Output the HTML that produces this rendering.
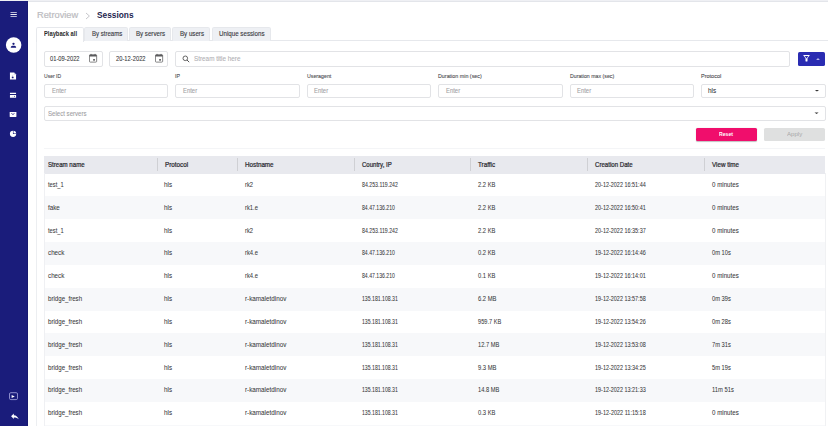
<!DOCTYPE html>
<html><head><meta charset="utf-8"><style>
html,body{margin:0;padding:0;width:828px;height:426px;overflow:hidden;background:#fff;position:relative;}
.t{position:absolute;white-space:nowrap;line-height:1;font-family:"Liberation Sans",sans-serif;}
.b{position:absolute;}
</style></head><body>
<div class="b" style="left:0.00px;top:0.00px;width:828.00px;height:2.10px;background:#eff0f4;border-bottom:0.4px solid #e3e5ea;box-sizing:border-box"></div>
<div class="b" style="left:0.00px;top:1.40px;width:28.00px;height:424.60px;background:#1a1c7b"></div>
<svg class="b" style="left:0;top:0" width="28" height="426" viewBox="0 0 28 426">
 <rect x="27.2" y="1.4" width="0.8" height="425" fill="#16186e"/>
 <g fill="#ececf4">
  <rect x="10.45" y="11.9" width="6.4" height="0.95" rx="0.3"/>
  <rect x="10.45" y="14.0" width="6.4" height="0.95" rx="0.3"/>
  <rect x="10.45" y="16.15" width="6.4" height="0.95" rx="0.3"/>
 </g>
 <circle cx="13.65" cy="45.1" r="7.75" fill="#fff"/>
 <g fill="#1a1c7b">
  <circle cx="13.5" cy="43.8" r="1.15"/>
  <path d="M10.8 47.8 v-0.7 c0-1 1.6-1.4 2.7-1.4 s2.6 0.4 2.6 1.4 v0.7z"/>
 </g>
 <path d="M9.95 72.5 h4.1 l2 2 v5.1 h-6.1z" fill="#fff"/>
 <path d="M14.05 72.5 v2 h2z" fill="#c8c8dc"/>
 <circle cx="12.7" cy="77.4" r="0.95" fill="#1a1c7b"/>
 <path d="M12.1 76.3 q0.2 -1.5 1.5 -1.6" stroke="#b0b0c8" stroke-width="0.4" fill="none"/>
 <rect x="9.95" y="92.8" width="6.1" height="1.3" rx="0.2" fill="#fff"/>
 <rect x="9.95" y="95.05" width="6.15" height="2.65" rx="0.3" fill="#fff"/>
 <circle cx="14.4" cy="96.4" r="0.55" fill="#6a6a90"/>
 <circle cx="12.5" cy="96.4" r="0.4" fill="#d0d0dc"/>
 <rect x="9.7" y="112.1" width="6.7" height="4.8" rx="0.3" fill="#fff"/>
 <path d="M11.4 113.4 q1.55 2.2 3.1 0" stroke="#1a1c7b" stroke-width="0.8" fill="none"/>
 <circle cx="13.05" cy="133.85" r="3.15" fill="#fff"/>
 <path d="M13.4 133.5 h3.2 M13.4 133.5 v-3.2" stroke="#1a1c7b" stroke-width="0.55"/>
 <circle cx="13.45" cy="133.45" r="0.5" fill="#1a1c7b"/>
 <rect x="9.5" y="392.7" width="8" height="6.9" rx="1.3" fill="none" stroke="#9a9ad6" stroke-width="0.9"/>
 <path d="M11.6 395 l3.2 1.5 l-3.2 1.5z" fill="#fff"/>
 <path d="M11.1 416.3 L13.8 413.6 V415.2 C16.3 415.4 17.8 416.8 18.8 419.3 C17.6 418 16 417.4 13.8 417.4 V418.9 Z" fill="#fff"/>
</svg>
<div class="t" style="left:36.90px;top:11.00px;font-size:9.2px;color:#bcbcc1;font-weight:400;transform:scaleX(1.0073);transform-origin:0 0;-webkit-text-stroke:0.22px #bcbcc1;">Retroview</div>
<svg class="b" style="left:85px;top:12px" width="6" height="8" viewBox="0 0 6 8"><path d="M1 1 L4.4 4 L1 7" stroke="#c0c0c4" stroke-width="0.9" fill="none"/></svg>
<div class="t" style="left:97.40px;top:11.00px;font-size:8.8px;color:#1e1f4f;font-weight:700;transform:scaleX(0.9472);transform-origin:0 0;">Sessions</div>
<div class="b" style="left:36.00px;top:41.00px;width:0.80px;height:385.00px;background:#eceef1"></div>
<div class="b" style="left:36.30px;top:40.40px;width:791.70px;height:0.70px;background:#e6e8ec"></div>
<div class="b" style="left:36.30px;top:27.30px;width:47.70px;height:14.70px;background:#fff;border:0.7px solid #e6e8ec;border-bottom:none;border-radius:2.2px 2.2px 0 0;box-sizing:border-box"></div>
<div class="b" style="left:84.30px;top:27.30px;width:43.70px;height:13.40px;background:#eef0f4;border:0.6px solid #e6e8ec;border-bottom:none;border-radius:2.2px 2.2px 0 0;box-sizing:border-box"></div>
<div class="b" style="left:129.30px;top:27.30px;width:42.00px;height:13.40px;background:#eef0f4;border:0.6px solid #e6e8ec;border-bottom:none;border-radius:2.2px 2.2px 0 0;box-sizing:border-box"></div>
<div class="b" style="left:172.40px;top:27.30px;width:38.00px;height:13.40px;background:#eef0f4;border:0.6px solid #e6e8ec;border-bottom:none;border-radius:2.2px 2.2px 0 0;box-sizing:border-box"></div>
<div class="b" style="left:211.50px;top:27.30px;width:59.50px;height:13.40px;background:#eef0f4;border:0.6px solid #e6e8ec;border-bottom:none;border-radius:2.2px 2.2px 0 0;box-sizing:border-box"></div>
<div class="t" style="left:44.10px;top:31.00px;font-size:6.5px;color:#2b2b2b;font-weight:700;transform:scaleX(0.8866);transform-origin:0 0;">Playback all</div>
<div class="t" style="left:91.60px;top:31.00px;font-size:6.5px;color:#38383e;font-weight:400;transform:scaleX(0.9290);transform-origin:0 0;-webkit-text-stroke:0.12px #38383e;">By streams</div>
<div class="t" style="left:136.00px;top:31.00px;font-size:6.5px;color:#38383e;font-weight:400;transform:scaleX(0.9446);transform-origin:0 0;-webkit-text-stroke:0.12px #38383e;">By servers</div>
<div class="t" style="left:179.50px;top:31.00px;font-size:6.5px;color:#38383e;font-weight:400;transform:scaleX(0.9491);transform-origin:0 0;-webkit-text-stroke:0.12px #38383e;">By users</div>
<div class="t" style="left:218.50px;top:31.00px;font-size:6.5px;color:#38383e;font-weight:400;transform:scaleX(0.9540);transform-origin:0 0;-webkit-text-stroke:0.12px #38383e;">Unique sessions</div>
<div class="b" style="left:43.50px;top:51.40px;width:59.30px;height:15.60px;background:#fff;border:0.7px solid #e2e3e6;border-radius:2px;box-sizing:border-box"></div>
<div class="t" style="left:49.90px;top:56.00px;font-size:6.8px;color:#333336;font-weight:400;transform:scaleX(0.8510);transform-origin:0 0;-webkit-text-stroke:0.06px #333336;">01-09-2022</div>
<svg class="b" style="left:88.90px;top:53px" width="10" height="11" viewBox="0 0 10 11"><rect x="0.45" y="1.8" width="7.2" height="7.3" rx="0.8" fill="none" stroke="#5c5c5e" stroke-width="0.75"/><rect x="0.45" y="1.8" width="7.2" height="1.7" fill="#5c5c5e"/><rect x="1.6" y="0.9" width="0.9" height="1.5" fill="#5a5a5c"/><rect x="5.6" y="0.9" width="0.9" height="1.5" fill="#5a5a5c"/><rect x="4.2" y="6" width="1.7" height="1.7" fill="#5a5a5c"/></svg>
<div class="b" style="left:109.10px;top:51.40px;width:59.40px;height:15.60px;background:#fff;border:0.7px solid #e2e3e6;border-radius:2px;box-sizing:border-box"></div>
<div class="t" style="left:115.50px;top:56.00px;font-size:6.8px;color:#333336;font-weight:400;transform:scaleX(0.8510);transform-origin:0 0;-webkit-text-stroke:0.06px #333336;">20-12-2022</div>
<svg class="b" style="left:154.50px;top:53px" width="10" height="11" viewBox="0 0 10 11"><rect x="0.45" y="1.8" width="7.2" height="7.3" rx="0.8" fill="none" stroke="#5c5c5e" stroke-width="0.75"/><rect x="0.45" y="1.8" width="7.2" height="1.7" fill="#5c5c5e"/><rect x="1.6" y="0.9" width="0.9" height="1.5" fill="#5a5a5c"/><rect x="5.6" y="0.9" width="0.9" height="1.5" fill="#5a5a5c"/><rect x="4.2" y="6" width="1.7" height="1.7" fill="#5a5a5c"/></svg>
<div class="b" style="left:175.00px;top:51.40px;width:615.00px;height:15.60px;background:#fff;border:0.7px solid #e2e3e6;border-radius:2px;box-sizing:border-box"></div>
<svg class="b" style="left:182px;top:55px" width="8" height="8" viewBox="0 0 8 8"><circle cx="3.3" cy="3.3" r="2.3" fill="none" stroke="#555" stroke-width="0.9"/><path d="M5 5 L7.2 7.2" stroke="#555" stroke-width="1"/></svg>
<div class="t" style="left:193.60px;top:56.00px;font-size:6.8px;color:#b0b0b4;font-weight:400;transform:scaleX(0.9321);transform-origin:0 0;-webkit-text-stroke:0.08px #b0b0b4;">Stream title here</div>
<div class="b" style="left:797.60px;top:51.90px;width:27.30px;height:13.80px;background:#2a2cb2;border-radius:1.6px"></div>
<svg class="b" style="left:796px;top:50px" width="30" height="18" viewBox="796 50 30 18"><path d="M803.1 55.1 H809.9 L807.5 58.2 V61.2 Q806.5 62 805.5 61.2 V58.2 Z" fill="#fff"/><path d="M804.6 55.95 H808.4 L806.5 58.4 Z" fill="#2a2cb2"/><path d="M816.1 59.9 L818 58 L819.9 59.9 Z" fill="#b8b8e8"/></svg>
<div class="t" style="left:43.90px;top:74.00px;font-size:5.8px;color:#4c4c50;font-weight:400;transform:scaleX(0.8699);transform-origin:0 0;-webkit-text-stroke:0.1px #4c4c50;">User ID</div>
<div class="b" style="left:43.70px;top:83.80px;width:124.60px;height:13.80px;background:#fff;border:0.7px solid #e2e3e6;border-radius:2px;box-sizing:border-box"></div>
<div class="t" style="left:51.50px;top:88.00px;font-size:6.8px;color:#9e9ea2;font-weight:400;transform:scaleX(0.8675);transform-origin:0 0;-webkit-text-stroke:0.08px #9e9ea2;">Enter</div>
<div class="t" style="left:175.35px;top:74.00px;font-size:5.8px;color:#4c4c50;font-weight:400;transform:scaleX(0.9124);transform-origin:0 0;-webkit-text-stroke:0.1px #4c4c50;">IP</div>
<div class="b" style="left:175.15px;top:83.80px;width:124.60px;height:13.80px;background:#fff;border:0.7px solid #e2e3e6;border-radius:2px;box-sizing:border-box"></div>
<div class="t" style="left:182.95px;top:88.00px;font-size:6.8px;color:#9e9ea2;font-weight:400;transform:scaleX(0.8675);transform-origin:0 0;-webkit-text-stroke:0.08px #9e9ea2;">Enter</div>
<div class="t" style="left:306.80px;top:74.00px;font-size:5.8px;color:#4c4c50;font-weight:400;transform:scaleX(0.9081);transform-origin:0 0;-webkit-text-stroke:0.1px #4c4c50;">Useragent</div>
<div class="b" style="left:306.60px;top:83.80px;width:124.60px;height:13.80px;background:#fff;border:0.7px solid #e2e3e6;border-radius:2px;box-sizing:border-box"></div>
<div class="t" style="left:314.40px;top:88.00px;font-size:6.8px;color:#9e9ea2;font-weight:400;transform:scaleX(0.8675);transform-origin:0 0;-webkit-text-stroke:0.08px #9e9ea2;">Enter</div>
<div class="t" style="left:438.25px;top:74.00px;font-size:5.8px;color:#4c4c50;font-weight:400;transform:scaleX(0.9244);transform-origin:0 0;-webkit-text-stroke:0.1px #4c4c50;">Duration min (sec)</div>
<div class="b" style="left:438.05px;top:83.80px;width:124.60px;height:13.80px;background:#fff;border:0.7px solid #e2e3e6;border-radius:2px;box-sizing:border-box"></div>
<div class="t" style="left:445.85px;top:88.00px;font-size:6.8px;color:#9e9ea2;font-weight:400;transform:scaleX(0.8675);transform-origin:0 0;-webkit-text-stroke:0.08px #9e9ea2;">Enter</div>
<div class="t" style="left:569.70px;top:74.00px;font-size:5.8px;color:#4c4c50;font-weight:400;transform:scaleX(0.9022);transform-origin:0 0;-webkit-text-stroke:0.1px #4c4c50;">Duration max (sec)</div>
<div class="b" style="left:569.50px;top:83.80px;width:124.60px;height:13.80px;background:#fff;border:0.7px solid #e2e3e6;border-radius:2px;box-sizing:border-box"></div>
<div class="t" style="left:577.30px;top:88.00px;font-size:6.8px;color:#9e9ea2;font-weight:400;transform:scaleX(0.8675);transform-origin:0 0;-webkit-text-stroke:0.08px #9e9ea2;">Enter</div>
<div class="t" style="left:701.15px;top:74.00px;font-size:5.8px;color:#4c4c50;font-weight:400;transform:scaleX(0.9494);transform-origin:0 0;-webkit-text-stroke:0.1px #4c4c50;">Protocol</div>
<div class="b" style="left:700.95px;top:83.80px;width:124.65px;height:13.80px;background:#fff;border:0.7px solid #e2e3e6;border-radius:2px;box-sizing:border-box"></div>
<div class="t" style="left:708.05px;top:88.00px;font-size:6.8px;color:#333336;font-weight:400;transform:scaleX(0.9433);transform-origin:0 0;-webkit-text-stroke:0.05px #333336;">hls</div>
<svg class="b" style="left:814px;top:89px" width="6" height="3" viewBox="0 0 6 3"><path d="M0.9 0.9 h4.1 l-2.05 1.7z" fill="#333"/></svg>
<div class="b" style="left:43.70px;top:106.30px;width:781.90px;height:14.30px;background:#fff;border:0.7px solid #e2e3e6;border-radius:2px;box-sizing:border-box"></div>
<div class="t" style="left:48.00px;top:111.00px;font-size:6.8px;color:#9e9ea2;font-weight:400;transform:scaleX(0.8960);transform-origin:0 0;-webkit-text-stroke:0.08px #9e9ea2;">Select servers</div>
<svg class="b" style="left:813.5px;top:111.6px" width="6" height="3" viewBox="0 0 6 3"><path d="M0.5 0.4 h4.1 l-2.05 1.7z" fill="#333"/></svg>
<div class="b" style="left:695.60px;top:127.55px;width:61.50px;height:13.35px;background:#f00e6c;border-radius:1.6px;box-shadow:0 0.5px 1px rgba(0,0,0,0.25)"></div>
<div class="t" style="left:718.90px;top:132.00px;font-size:5.4px;color:#ffffff;font-weight:700;transform:scaleX(0.9519);transform-origin:0 0;">Reset</div>
<div class="b" style="left:764.20px;top:127.60px;width:61.00px;height:13.15px;background:#dfe0e0;border-radius:1.6px"></div>
<div class="t" style="left:786.90px;top:132.00px;font-size:5.8px;color:#a8a8a8;font-weight:400;transform:scaleX(1.0477);transform-origin:0 0;">Apply</div>
<div class="b" style="left:43.50px;top:147.60px;width:781.50px;height:1.00px;background:#f4f5f7"></div>
<div class="b" style="left:43.90px;top:155.50px;width:781.30px;height:18.10px;background:#e8e9ee"></div>
<div class="b" style="left:156.75px;top:158.40px;width:0.70px;height:12.60px;background:#cfd0d4"></div>
<div class="b" style="left:237.05px;top:158.40px;width:0.70px;height:12.60px;background:#cfd0d4"></div>
<div class="b" style="left:353.85px;top:158.40px;width:0.70px;height:12.60px;background:#cfd0d4"></div>
<div class="b" style="left:470.05px;top:158.40px;width:0.70px;height:12.60px;background:#cfd0d4"></div>
<div class="b" style="left:587.15px;top:158.40px;width:0.70px;height:12.60px;background:#cfd0d4"></div>
<div class="b" style="left:703.95px;top:158.40px;width:0.70px;height:12.60px;background:#cfd0d4"></div>
<div class="t" style="left:47.70px;top:162.00px;font-size:6.5px;color:#2a2a30;font-weight:400;transform:scaleX(0.9381);transform-origin:0 0;-webkit-text-stroke:0.22px #2a2a30;">Stream name</div>
<div class="t" style="left:164.60px;top:162.00px;font-size:6.5px;color:#2a2a30;font-weight:400;transform:scaleX(0.9729);transform-origin:0 0;-webkit-text-stroke:0.22px #2a2a30;">Protocol</div>
<div class="t" style="left:244.60px;top:162.00px;font-size:6.5px;color:#2a2a30;font-weight:400;transform:scaleX(0.9650);transform-origin:0 0;-webkit-text-stroke:0.22px #2a2a30;">Hostname</div>
<div class="t" style="left:361.70px;top:162.00px;font-size:6.5px;color:#2a2a30;font-weight:400;transform:scaleX(0.9272);transform-origin:0 0;-webkit-text-stroke:0.22px #2a2a30;">Country, IP</div>
<div class="t" style="left:478.10px;top:162.00px;font-size:6.5px;color:#2a2a30;font-weight:400;transform:scaleX(0.9662);transform-origin:0 0;-webkit-text-stroke:0.22px #2a2a30;">Traffic</div>
<div class="t" style="left:594.90px;top:162.00px;font-size:6.5px;color:#2a2a30;font-weight:400;transform:scaleX(0.9375);transform-origin:0 0;-webkit-text-stroke:0.22px #2a2a30;">Creation Date</div>
<div class="t" style="left:711.60px;top:162.00px;font-size:6.5px;color:#2a2a30;font-weight:400;transform:scaleX(0.9623);transform-origin:0 0;-webkit-text-stroke:0.22px #2a2a30;">View time</div>
<div class="t" style="left:47.70px;top:182.00px;font-size:6.8px;color:#38383b;font-weight:400;transform:scaleX(0.8483);transform-origin:0 0;-webkit-text-stroke:0.05px #38383b;">test_1</div>
<div class="t" style="left:164.40px;top:182.00px;font-size:6.8px;color:#38383b;font-weight:400;transform:scaleX(0.9224);transform-origin:0 0;-webkit-text-stroke:0.05px #38383b;">hls</div>
<div class="t" style="left:244.60px;top:182.00px;font-size:6.8px;color:#38383b;font-weight:400;transform:scaleX(0.8593);transform-origin:0 0;-webkit-text-stroke:0.05px #38383b;">rk2</div>
<div class="t" style="left:361.80px;top:182.00px;font-size:6.8px;color:#38383b;font-weight:400;transform:scaleX(0.7672);transform-origin:0 0;-webkit-text-stroke:0.05px #38383b;">84.253.119.242</div>
<div class="t" style="left:478.10px;top:182.00px;font-size:6.8px;color:#38383b;font-weight:400;transform:scaleX(0.8525);transform-origin:0 0;-webkit-text-stroke:0.05px #38383b;">2.2 KB</div>
<div class="t" style="left:595.00px;top:182.00px;font-size:6.8px;color:#38383b;font-weight:400;transform:scaleX(0.8033);transform-origin:0 0;-webkit-text-stroke:0.05px #38383b;">20-12-2022 16:51:44</div>
<div class="t" style="left:711.80px;top:182.00px;font-size:6.8px;color:#38383b;font-weight:400;transform:scaleX(0.9074);transform-origin:0 0;-webkit-text-stroke:0.05px #38383b;">0 minutes</div>
<div class="b" style="left:43.90px;top:196.42px;width:781.30px;height:22.82px;background:#f7f8fa"></div>
<div class="t" style="left:47.70px;top:205.00px;font-size:6.8px;color:#38383b;font-weight:400;transform:scaleX(0.9224);transform-origin:0 0;-webkit-text-stroke:0.05px #38383b;">fake</div>
<div class="t" style="left:164.40px;top:205.00px;font-size:6.8px;color:#38383b;font-weight:400;transform:scaleX(0.9224);transform-origin:0 0;-webkit-text-stroke:0.05px #38383b;">hls</div>
<div class="t" style="left:244.60px;top:205.00px;font-size:6.8px;color:#38383b;font-weight:400;transform:scaleX(0.8573);transform-origin:0 0;-webkit-text-stroke:0.05px #38383b;">rk1.e</div>
<div class="t" style="left:361.80px;top:205.00px;font-size:6.8px;color:#38383b;font-weight:400;transform:scaleX(0.7585);transform-origin:0 0;-webkit-text-stroke:0.05px #38383b;">84.47.136.210</div>
<div class="t" style="left:478.10px;top:205.00px;font-size:6.8px;color:#38383b;font-weight:400;transform:scaleX(0.8525);transform-origin:0 0;-webkit-text-stroke:0.05px #38383b;">2.2 KB</div>
<div class="t" style="left:595.00px;top:205.00px;font-size:6.8px;color:#38383b;font-weight:400;transform:scaleX(0.8033);transform-origin:0 0;-webkit-text-stroke:0.05px #38383b;">20-12-2022 16:50:41</div>
<div class="t" style="left:711.80px;top:205.00px;font-size:6.8px;color:#38383b;font-weight:400;transform:scaleX(0.9074);transform-origin:0 0;-webkit-text-stroke:0.05px #38383b;">0 minutes</div>
<div class="t" style="left:47.70px;top:228.00px;font-size:6.8px;color:#38383b;font-weight:400;transform:scaleX(0.8483);transform-origin:0 0;-webkit-text-stroke:0.05px #38383b;">test_1</div>
<div class="t" style="left:164.40px;top:228.00px;font-size:6.8px;color:#38383b;font-weight:400;transform:scaleX(0.9224);transform-origin:0 0;-webkit-text-stroke:0.05px #38383b;">hls</div>
<div class="t" style="left:244.60px;top:228.00px;font-size:6.8px;color:#38383b;font-weight:400;transform:scaleX(0.8593);transform-origin:0 0;-webkit-text-stroke:0.05px #38383b;">rk2</div>
<div class="t" style="left:361.80px;top:228.00px;font-size:6.8px;color:#38383b;font-weight:400;transform:scaleX(0.7672);transform-origin:0 0;-webkit-text-stroke:0.05px #38383b;">84.253.119.242</div>
<div class="t" style="left:478.10px;top:228.00px;font-size:6.8px;color:#38383b;font-weight:400;transform:scaleX(0.8525);transform-origin:0 0;-webkit-text-stroke:0.05px #38383b;">2.2 KB</div>
<div class="t" style="left:595.00px;top:228.00px;font-size:6.8px;color:#38383b;font-weight:400;transform:scaleX(0.8033);transform-origin:0 0;-webkit-text-stroke:0.05px #38383b;">20-12-2022 16:35:37</div>
<div class="t" style="left:711.80px;top:228.00px;font-size:6.8px;color:#38383b;font-weight:400;transform:scaleX(0.9074);transform-origin:0 0;-webkit-text-stroke:0.05px #38383b;">0 minutes</div>
<div class="b" style="left:43.90px;top:242.06px;width:781.30px;height:22.82px;background:#f7f8fa"></div>
<div class="t" style="left:47.70px;top:250.00px;font-size:6.8px;color:#38383b;font-weight:400;transform:scaleX(0.9224);transform-origin:0 0;-webkit-text-stroke:0.05px #38383b;">check</div>
<div class="t" style="left:164.40px;top:250.00px;font-size:6.8px;color:#38383b;font-weight:400;transform:scaleX(0.9224);transform-origin:0 0;-webkit-text-stroke:0.05px #38383b;">hls</div>
<div class="t" style="left:244.60px;top:250.00px;font-size:6.8px;color:#38383b;font-weight:400;transform:scaleX(0.8573);transform-origin:0 0;-webkit-text-stroke:0.05px #38383b;">rk4.e</div>
<div class="t" style="left:361.80px;top:250.00px;font-size:6.8px;color:#38383b;font-weight:400;transform:scaleX(0.7585);transform-origin:0 0;-webkit-text-stroke:0.05px #38383b;">84.47.136.210</div>
<div class="t" style="left:478.10px;top:250.00px;font-size:6.8px;color:#38383b;font-weight:400;transform:scaleX(0.8525);transform-origin:0 0;-webkit-text-stroke:0.05px #38383b;">0.2 KB</div>
<div class="t" style="left:595.00px;top:250.00px;font-size:6.8px;color:#38383b;font-weight:400;transform:scaleX(0.8033);transform-origin:0 0;-webkit-text-stroke:0.05px #38383b;">19-12-2022 16:14:46</div>
<div class="t" style="left:711.80px;top:250.00px;font-size:6.8px;color:#38383b;font-weight:400;transform:scaleX(0.8491);transform-origin:0 0;-webkit-text-stroke:0.05px #38383b;">0m 10s</div>
<div class="t" style="left:47.70px;top:273.00px;font-size:6.8px;color:#38383b;font-weight:400;transform:scaleX(0.9224);transform-origin:0 0;-webkit-text-stroke:0.05px #38383b;">check</div>
<div class="t" style="left:164.40px;top:273.00px;font-size:6.8px;color:#38383b;font-weight:400;transform:scaleX(0.9224);transform-origin:0 0;-webkit-text-stroke:0.05px #38383b;">hls</div>
<div class="t" style="left:244.60px;top:273.00px;font-size:6.8px;color:#38383b;font-weight:400;transform:scaleX(0.8573);transform-origin:0 0;-webkit-text-stroke:0.05px #38383b;">rk4.e</div>
<div class="t" style="left:361.80px;top:273.00px;font-size:6.8px;color:#38383b;font-weight:400;transform:scaleX(0.7585);transform-origin:0 0;-webkit-text-stroke:0.05px #38383b;">84.47.136.210</div>
<div class="t" style="left:478.10px;top:273.00px;font-size:6.8px;color:#38383b;font-weight:400;transform:scaleX(0.8525);transform-origin:0 0;-webkit-text-stroke:0.05px #38383b;">0.1 KB</div>
<div class="t" style="left:595.00px;top:273.00px;font-size:6.8px;color:#38383b;font-weight:400;transform:scaleX(0.8033);transform-origin:0 0;-webkit-text-stroke:0.05px #38383b;">19-12-2022 16:14:01</div>
<div class="t" style="left:711.80px;top:273.00px;font-size:6.8px;color:#38383b;font-weight:400;transform:scaleX(0.9074);transform-origin:0 0;-webkit-text-stroke:0.05px #38383b;">0 minutes</div>
<div class="b" style="left:43.90px;top:287.70px;width:781.30px;height:22.82px;background:#f7f8fa"></div>
<div class="t" style="left:47.70px;top:296.00px;font-size:6.8px;color:#38383b;font-weight:400;transform:scaleX(0.9019);transform-origin:0 0;-webkit-text-stroke:0.05px #38383b;">bridge_fresh</div>
<div class="t" style="left:164.40px;top:296.00px;font-size:6.8px;color:#38383b;font-weight:400;transform:scaleX(0.9224);transform-origin:0 0;-webkit-text-stroke:0.05px #38383b;">hls</div>
<div class="t" style="left:244.60px;top:296.00px;font-size:6.8px;color:#38383b;font-weight:400;transform:scaleX(0.9266);transform-origin:0 0;-webkit-text-stroke:0.05px #38383b;">r-kamaletdinov</div>
<div class="t" style="left:361.80px;top:296.00px;font-size:6.8px;color:#38383b;font-weight:400;transform:scaleX(0.7590);transform-origin:0 0;-webkit-text-stroke:0.05px #38383b;">135.181.108.31</div>
<div class="t" style="left:478.10px;top:296.00px;font-size:6.8px;color:#38383b;font-weight:400;transform:scaleX(0.8562);transform-origin:0 0;-webkit-text-stroke:0.05px #38383b;">6.2 MB</div>
<div class="t" style="left:595.00px;top:296.00px;font-size:6.8px;color:#38383b;font-weight:400;transform:scaleX(0.8033);transform-origin:0 0;-webkit-text-stroke:0.05px #38383b;">19-12-2022 13:57:58</div>
<div class="t" style="left:711.80px;top:296.00px;font-size:6.8px;color:#38383b;font-weight:400;transform:scaleX(0.8491);transform-origin:0 0;-webkit-text-stroke:0.05px #38383b;">0m 39s</div>
<div class="t" style="left:47.70px;top:319.00px;font-size:6.8px;color:#38383b;font-weight:400;transform:scaleX(0.9019);transform-origin:0 0;-webkit-text-stroke:0.05px #38383b;">bridge_fresh</div>
<div class="t" style="left:164.40px;top:319.00px;font-size:6.8px;color:#38383b;font-weight:400;transform:scaleX(0.9224);transform-origin:0 0;-webkit-text-stroke:0.05px #38383b;">hls</div>
<div class="t" style="left:244.60px;top:319.00px;font-size:6.8px;color:#38383b;font-weight:400;transform:scaleX(0.9266);transform-origin:0 0;-webkit-text-stroke:0.05px #38383b;">r-kamaletdinov</div>
<div class="t" style="left:361.80px;top:319.00px;font-size:6.8px;color:#38383b;font-weight:400;transform:scaleX(0.7590);transform-origin:0 0;-webkit-text-stroke:0.05px #38383b;">135.181.108.31</div>
<div class="t" style="left:478.10px;top:319.00px;font-size:6.8px;color:#38383b;font-weight:400;transform:scaleX(0.8288);transform-origin:0 0;-webkit-text-stroke:0.05px #38383b;">959.7 KB</div>
<div class="t" style="left:595.00px;top:319.00px;font-size:6.8px;color:#38383b;font-weight:400;transform:scaleX(0.8033);transform-origin:0 0;-webkit-text-stroke:0.05px #38383b;">19-12-2022 13:54:26</div>
<div class="t" style="left:711.80px;top:319.00px;font-size:6.8px;color:#38383b;font-weight:400;transform:scaleX(0.8491);transform-origin:0 0;-webkit-text-stroke:0.05px #38383b;">0m 28s</div>
<div class="b" style="left:43.90px;top:333.34px;width:781.30px;height:22.82px;background:#f7f8fa"></div>
<div class="t" style="left:47.70px;top:342.00px;font-size:6.8px;color:#38383b;font-weight:400;transform:scaleX(0.9019);transform-origin:0 0;-webkit-text-stroke:0.05px #38383b;">bridge_fresh</div>
<div class="t" style="left:164.40px;top:342.00px;font-size:6.8px;color:#38383b;font-weight:400;transform:scaleX(0.9224);transform-origin:0 0;-webkit-text-stroke:0.05px #38383b;">hls</div>
<div class="t" style="left:244.60px;top:342.00px;font-size:6.8px;color:#38383b;font-weight:400;transform:scaleX(0.9266);transform-origin:0 0;-webkit-text-stroke:0.05px #38383b;">r-kamaletdinov</div>
<div class="t" style="left:361.80px;top:342.00px;font-size:6.8px;color:#38383b;font-weight:400;transform:scaleX(0.7590);transform-origin:0 0;-webkit-text-stroke:0.05px #38383b;">135.181.108.31</div>
<div class="t" style="left:478.10px;top:342.00px;font-size:6.8px;color:#38383b;font-weight:400;transform:scaleX(0.8425);transform-origin:0 0;-webkit-text-stroke:0.05px #38383b;">12.7 MB</div>
<div class="t" style="left:595.00px;top:342.00px;font-size:6.8px;color:#38383b;font-weight:400;transform:scaleX(0.8033);transform-origin:0 0;-webkit-text-stroke:0.05px #38383b;">19-12-2022 13:53:08</div>
<div class="t" style="left:711.80px;top:342.00px;font-size:6.8px;color:#38383b;font-weight:400;transform:scaleX(0.8491);transform-origin:0 0;-webkit-text-stroke:0.05px #38383b;">7m 31s</div>
<div class="t" style="left:47.70px;top:365.00px;font-size:6.8px;color:#38383b;font-weight:400;transform:scaleX(0.9019);transform-origin:0 0;-webkit-text-stroke:0.05px #38383b;">bridge_fresh</div>
<div class="t" style="left:164.40px;top:365.00px;font-size:6.8px;color:#38383b;font-weight:400;transform:scaleX(0.9224);transform-origin:0 0;-webkit-text-stroke:0.05px #38383b;">hls</div>
<div class="t" style="left:244.60px;top:365.00px;font-size:6.8px;color:#38383b;font-weight:400;transform:scaleX(0.9266);transform-origin:0 0;-webkit-text-stroke:0.05px #38383b;">r-kamaletdinov</div>
<div class="t" style="left:361.80px;top:365.00px;font-size:6.8px;color:#38383b;font-weight:400;transform:scaleX(0.7590);transform-origin:0 0;-webkit-text-stroke:0.05px #38383b;">135.181.108.31</div>
<div class="t" style="left:478.10px;top:365.00px;font-size:6.8px;color:#38383b;font-weight:400;transform:scaleX(0.8562);transform-origin:0 0;-webkit-text-stroke:0.05px #38383b;">9.3 MB</div>
<div class="t" style="left:595.00px;top:365.00px;font-size:6.8px;color:#38383b;font-weight:400;transform:scaleX(0.8033);transform-origin:0 0;-webkit-text-stroke:0.05px #38383b;">19-12-2022 13:34:25</div>
<div class="t" style="left:711.80px;top:365.00px;font-size:6.8px;color:#38383b;font-weight:400;transform:scaleX(0.8491);transform-origin:0 0;-webkit-text-stroke:0.05px #38383b;">5m 19s</div>
<div class="b" style="left:43.90px;top:378.98px;width:781.30px;height:22.82px;background:#f7f8fa"></div>
<div class="t" style="left:47.70px;top:387.00px;font-size:6.8px;color:#38383b;font-weight:400;transform:scaleX(0.9019);transform-origin:0 0;-webkit-text-stroke:0.05px #38383b;">bridge_fresh</div>
<div class="t" style="left:164.40px;top:387.00px;font-size:6.8px;color:#38383b;font-weight:400;transform:scaleX(0.9224);transform-origin:0 0;-webkit-text-stroke:0.05px #38383b;">hls</div>
<div class="t" style="left:244.60px;top:387.00px;font-size:6.8px;color:#38383b;font-weight:400;transform:scaleX(0.9266);transform-origin:0 0;-webkit-text-stroke:0.05px #38383b;">r-kamaletdinov</div>
<div class="t" style="left:361.80px;top:387.00px;font-size:6.8px;color:#38383b;font-weight:400;transform:scaleX(0.7590);transform-origin:0 0;-webkit-text-stroke:0.05px #38383b;">135.181.108.31</div>
<div class="t" style="left:478.10px;top:387.00px;font-size:6.8px;color:#38383b;font-weight:400;transform:scaleX(0.8425);transform-origin:0 0;-webkit-text-stroke:0.05px #38383b;">14.8 MB</div>
<div class="t" style="left:595.00px;top:387.00px;font-size:6.8px;color:#38383b;font-weight:400;transform:scaleX(0.8033);transform-origin:0 0;-webkit-text-stroke:0.05px #38383b;">19-12-2022 13:21:33</div>
<div class="t" style="left:711.80px;top:387.00px;font-size:6.8px;color:#38383b;font-weight:400;transform:scaleX(0.8533);transform-origin:0 0;-webkit-text-stroke:0.05px #38383b;">11m 51s</div>
<div class="t" style="left:47.70px;top:410.00px;font-size:6.8px;color:#38383b;font-weight:400;transform:scaleX(0.9019);transform-origin:0 0;-webkit-text-stroke:0.05px #38383b;">bridge_fresh</div>
<div class="t" style="left:164.40px;top:410.00px;font-size:6.8px;color:#38383b;font-weight:400;transform:scaleX(0.9224);transform-origin:0 0;-webkit-text-stroke:0.05px #38383b;">hls</div>
<div class="t" style="left:244.60px;top:410.00px;font-size:6.8px;color:#38383b;font-weight:400;transform:scaleX(0.9266);transform-origin:0 0;-webkit-text-stroke:0.05px #38383b;">r-kamaletdinov</div>
<div class="t" style="left:361.80px;top:410.00px;font-size:6.8px;color:#38383b;font-weight:400;transform:scaleX(0.7590);transform-origin:0 0;-webkit-text-stroke:0.05px #38383b;">135.181.108.31</div>
<div class="t" style="left:478.10px;top:410.00px;font-size:6.8px;color:#38383b;font-weight:400;transform:scaleX(0.8525);transform-origin:0 0;-webkit-text-stroke:0.05px #38383b;">0.3 KB</div>
<div class="t" style="left:595.00px;top:410.00px;font-size:6.8px;color:#38383b;font-weight:400;transform:scaleX(0.8098);transform-origin:0 0;-webkit-text-stroke:0.05px #38383b;">19-12-2022 11:15:18</div>
<div class="t" style="left:711.80px;top:410.00px;font-size:6.8px;color:#38383b;font-weight:400;transform:scaleX(0.9074);transform-origin:0 0;-webkit-text-stroke:0.05px #38383b;">0 minutes</div>
<div class="b" style="left:43.90px;top:424.62px;width:781.30px;height:1.38px;background:#f7f8fa"></div>
<div class="b" style="left:825.00px;top:173.30px;width:0.60px;height:252.70px;background:#f0f1f3"></div>
<div class="b" style="left:43.70px;top:173.30px;width:0.60px;height:252.70px;background:#eff0f3"></div>
</body></html>
